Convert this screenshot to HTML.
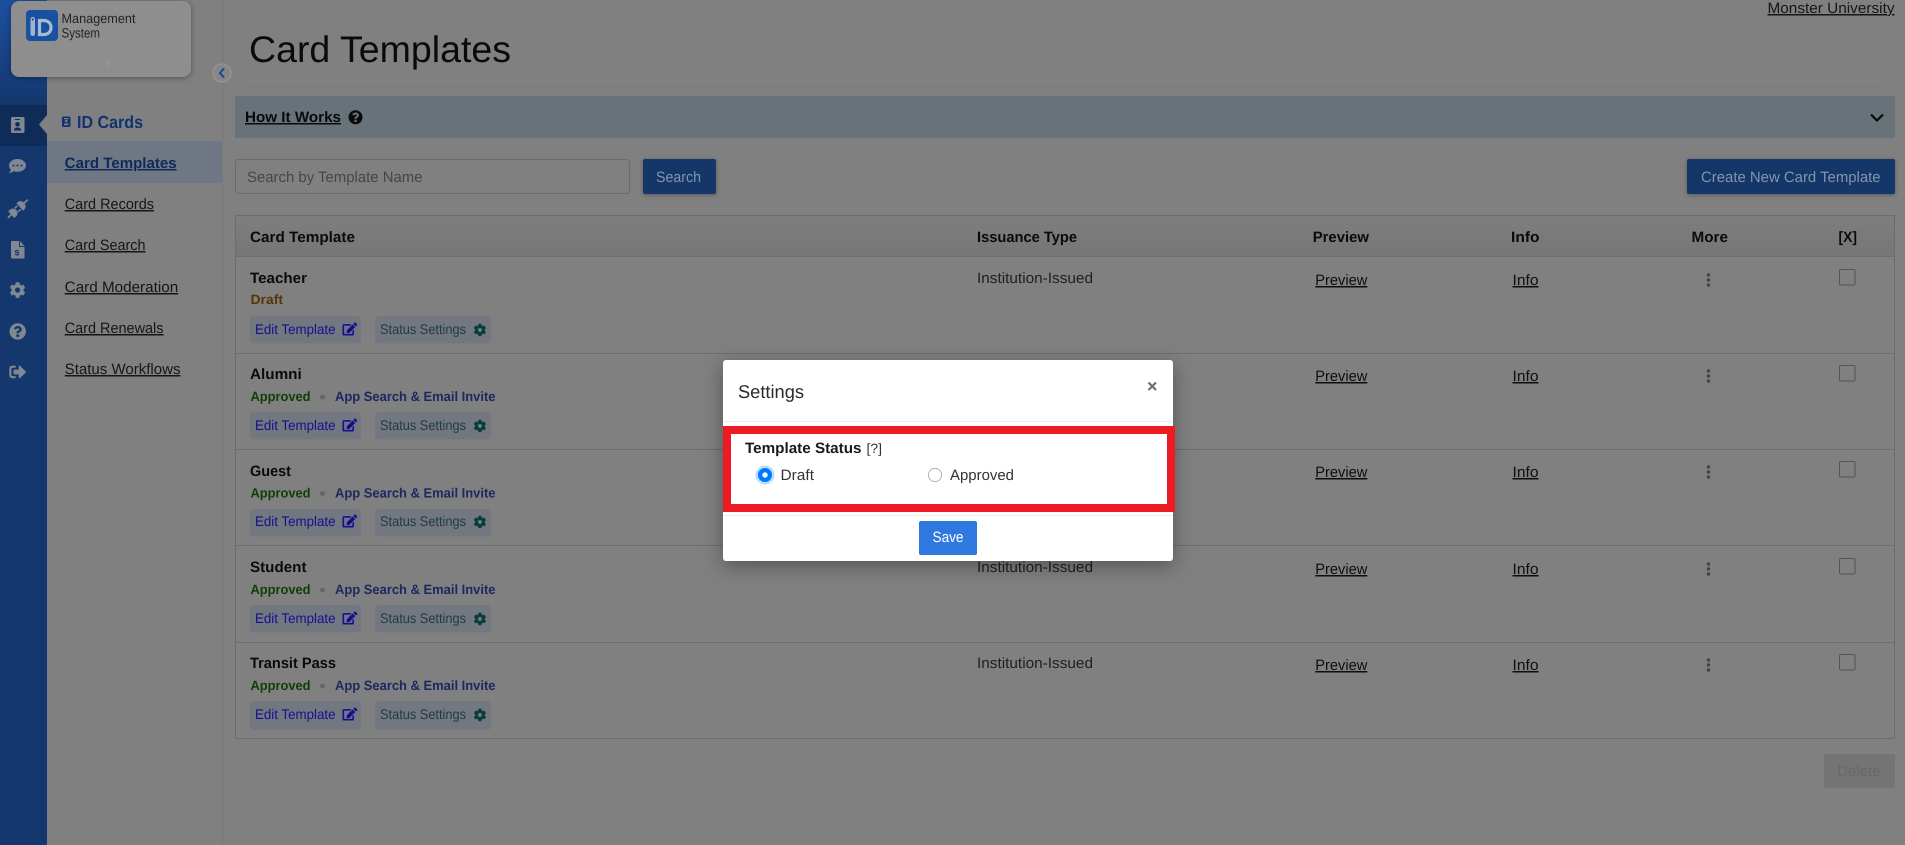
<!DOCTYPE html>
<html lang="en">
<head>
<meta charset="utf-8">
<title>Card Templates</title>
<style>
html,body{margin:0;padding:0;background:#808080;width:1905px;height:845px;overflow:hidden}
svg{display:block}
text{font-family:"Liberation Sans",sans-serif;font-size:15px;fill:#111;text-rendering:geometricPrecision}
.b{font-weight:700}
.u{text-decoration:underline}
.nav{fill:#161616}
.hd{font-weight:700;fill:#0a0a0a}
.nm{font-weight:700;fill:#0a0a0a}
.ap{font-weight:700;fill:#123c08;font-size:13.5px}
.as{font-weight:700;fill:#1f2762;font-size:13.5px}
.et{fill:#16108e;font-size:14px}
.st{fill:#1f3a44;font-size:14px}
.ln{fill:#0e0e0e}
.ii{fill:#202020}
</style>
</head>
<body>
<svg width="1905" height="845" viewBox="0 0 1905 845" xmlns="http://www.w3.org/2000/svg">
<defs>
<linearGradient id="sb" x1="0" y1="0" x2="0" y2="1"><stop offset="0" stop-color="#1c509f"/><stop offset="1" stop-color="#14376d"/></linearGradient>
<linearGradient id="th" x1="0" y1="0" x2="0" y2="1"><stop offset="0" stop-color="#7e7e7e"/><stop offset="1" stop-color="#767676"/></linearGradient>
<path id="qc" d="M504 256c0 136.997-111.043 248-248 248S8 392.997 8 256C8 119.083 119.043 8 256 8s248 111.083 248 248zM262.655 90c-54.497 0-89.255 22.957-116.549 63.758-3.536 5.286-2.353 12.415 2.715 16.258l34.699 26.310c5.205 3.947 12.621 3.008 16.665-2.122 17.864-22.658 30.113-35.797 57.303-35.797 20.429 0 45.698 13.148 45.698 32.958 0 14.976-12.363 22.667-32.534 33.976C247.128 238.528 216 254.941 216 296v4c0 6.627 5.373 12 12 12h56c6.627 0 12-5.373 12-12v-1.333c0-28.462 83.186-29.647 83.186-106.667 0-58.002-60.165-102-116.531-102zM256 338c-25.365 0-46 20.635-46 46 0 25.364 20.635 46 46 46s46-20.636 46-46c0-25.365-20.635-46-46-46z"/>
<path id="cog" d="M487.400 315.700l-42.600-24.600c4.300-23.200 4.300-47 0-70.200l42.600-24.600c4.900-2.800 7.100-8.600 5.500-14-11.100-35.600-30-67.800-54.700-94.600-3.800-4.100-10-5.100-14.800-2.300L380.800 110c-17.900-15.400-38.500-27.300-60.800-35.100V25.800c0-5.600-3.900-10.500-9.400-11.700-36.700-8.200-74.300-7.800-109.200 0-5.500 1.200-9.400 6.100-9.400 11.700V75c-22.200 7.900-42.800 19.800-60.800 35.100L88.700 85.500c-4.900-2.800-11-1.900-14.800 2.300-24.700 26.700-43.600 58.900-54.700 94.600-1.700 5.400.6 11.200 5.500 14L67.300 221c-4.300 23.200-4.300 47 0 70.200l-42.600 24.600c-4.900 2.800-7.100 8.600-5.500 14 11.100 35.600 30 67.800 54.700 94.600 3.800 4.100 10 5.100 14.800 2.300l42.600-24.600c17.900 15.400 38.500 27.300 60.800 35.100v49.200c0 5.600 3.900 10.500 9.400 11.700 36.700 8.200 74.300 7.800 109.200 0 5.500-1.200 9.400-6.100 9.400-11.700v-49.200c22.200-7.900 42.800-19.800 60.800-35.100l42.600 24.600c4.900 2.800 11 1.900 14.800-2.300 24.700-26.700 43.600-58.900 54.700-94.600 1.500-5.500-.7-11.300-5.600-14.100zM256 336c-44.100 0-80-35.900-80-80s35.900-80 80-80 80 35.900 80 80-35.900 80-80 80z"/>
<path id="ed" d="M402.600 83.200l90.200 90.200c3.800 3.800 3.800 10 0 13.800L274.400 405.600l-92.800 10.300c-12.400 1.400-22.900-9.100-21.500-21.500l10.300-92.800L388.800 83.200c3.800-3.800 10-3.800 13.800 0zm162-22.900l-48.800-48.800c-15.200-15.200-39.900-15.200-55.200 0l-35.400 35.400c-3.800 3.800-3.800 10 0 13.800l90.200 90.200c3.800 3.800 10 3.800 13.800 0l35.400-35.400c15.200-15.300 15.200-40 0-55.200zM384 346.200V448H64V128h229.800c3.200 0 6.200-1.300 8.500-3.500l40-40c7.600-7.600 2.200-20.500-8.500-20.500H48C21.500 64 0 85.500 0 112v352c0 26.500 21.500 48 48 48h352c26.500 0 48-21.500 48-48V306.200c0-10.700-12.900-16-20.500-8.500l-40 40c-2.200 2.300-3.500 5.300-3.500 8.500z"/>
</defs>

<!-- sidebar -->
<rect x="0" y="0" width="47" height="845" fill="#14376d"/>
<rect x="0" y="0" width="47" height="105" fill="url(#sb)"/>
<rect x="0" y="105" width="47" height="41" fill="#0f2b58"/>
<path d="M47 115L39 124.500L47 134Z" fill="#808080"/>
<rect x="222" y="0" width="1" height="845" fill="#777"/>

<!-- sidebar icons -->
<g fill="#7f8893">
<path fill-rule="evenodd" d="M12 117h11a1.500 1.500 0 0 1 1.500 1.500v13a1.500 1.500 0 0 1-1.500 1.500H12.500a1.500 1.500 0 0 1-1.500-1.500v-13A1.500 1.500 0 0 1 12 117zM15 119v1h5v-1zM17.500 122a2.300 2.300 0 1 0 .01 0zM13.800 130.500h7.400c0-2-1.700-3-3.700-3s-3.700 1-3.700 3z"/>
<path d="M17.500 159c-4.800 0-8.500 2.900-8.500 6.500 0 1.600.7 3 1.900 4.100-.3 1.300-1.300 2.500-2.200 3.200 2 0 3.800-.7 5.100-1.700 1.100.4 2.400.7 3.700.7 4.800 0 8.500-2.900 8.500-6.300s-3.700-6.500-8.500-6.500z"/>
<g fill="#14376d"><circle cx="13.500" cy="165.500" r="1"/><circle cx="17.500" cy="165.500" r="1"/><circle cx="21.500" cy="165.500" r="1"/></g>
<g transform="rotate(-42 17.500 209)">
<rect x="4.500" y="208.200" width="5" height="1.700"/>
<path d="M9 204.500h2.500c2.500 0 4.500 2 4.500 4.500s-2 4.500-4.500 4.500H9z"/>
<rect x="16" y="205.800" width="3.500" height="1.500"/><rect x="16" y="210.700" width="3.500" height="1.500"/>
<path d="M20.500 204h1.500c3 .3 4.500 2.300 4.500 5s-1.500 4.700-4.500 5h-1.500z"/>
<rect x="26.500" y="208.200" width="5" height="1.700"/>
</g>
<path d="M11 241h8v6h5.500v10.500a1 1 0 0 1-1 1H12a1 1 0 0 1-1-1zM20 241l4.500 5H20z"/>
<use href="#cog" transform="translate(9.500 282) scale(.0315)"/>
<use href="#qc" transform="translate(9.300 323) scale(.033)"/>
<g transform="translate(9.300 363.500) scale(.033)"><path d="M497 273L329 441c-15 15-41 4.500-41-17v-96H152c-13.300 0-24-10.700-24-24v-96c0-13.300 10.700-24 24-24h136V88c0-21.400 25.900-32 41-17l168 168c9.300 9.400 9.300 24.600 0 34zM192 436v-40c0-6.600-5.400-12-12-12H96c-17.700 0-32-14.300-32-32V160c0-17.700 14.300-32 32-32h84c6.600 0 12-5.400 12-12V76c0-6.600-5.400-12-12-12H96c-53 0-96 43-96 96v192c0 53 43 96 96 96h84c6.600 0 12-5.400 12-12z"/></g>
</g>
<text x="14.500" y="255.500" textLength="5" lengthAdjust="spacingAndGlyphs" style="font-size:8px;fill:#14376d;font-weight:700">$</text>

<!-- logo card -->
<rect x="11" y="1" width="180" height="76" rx="8" fill="#8e8e8e" style="filter:drop-shadow(0 1px 3px rgba(0,0,0,.35))"/>
<rect x="26" y="10" width="32" height="31" rx="4" fill="#17519f"/>
<rect x="30.500" y="17" width="4.500" height="19" rx="2.200" fill="#a3b3cc"/>
<circle cx="32.700" cy="19.500" r="1.100" fill="#17519f"/>
<path d="M39.500 20.500h4c4.300 0 7.500 2.600 7.500 7s-3.200 7-7.500 7h-4z" fill="none" stroke="#a9b9d2" stroke-width="3.200"/>
<text x="61.500" y="23" textLength="74" lengthAdjust="spacingAndGlyphs" style="font-size:13.500px;fill:#242424">Management</text>
<text x="61.500" y="37.500" textLength="38.500" lengthAdjust="spacingAndGlyphs" style="font-size:13.500px;fill:#242424">System</text>
<rect x="106" y="61" width="4" height="5" fill="#939393"/>

<!-- collapse button -->
<circle cx="222" cy="73" r="9" fill="#868686" stroke="#999" stroke-width="1"/>
<path d="M224 68.500L220 73L224 77.500" fill="none" stroke="#174792" stroke-width="2"/>

<!-- secondary nav -->
<rect x="62" y="116.500" width="8.500" height="10.500" rx="1.500" fill="#0f3370"/>
<rect x="64" y="118" width="4.500" height="1.200" fill="#808080"/>
<circle cx="66.200" cy="121" r="1.300" fill="#808080"/>
<rect x="64" y="123.500" width="4.500" height="1.700" fill="#808080"/>
<text x="77" y="128" textLength="66" lengthAdjust="spacingAndGlyphs" class="b" style="font-size:17.500px;fill:#0f3370">ID Cards</text>
<rect x="47" y="141" width="175" height="42" fill="#6f7785"/>
<text x="64.700" y="168" textLength="112" lengthAdjust="spacingAndGlyphs" class="b u" style="fill:#0e2a58">Card Templates</text>
<text x="64.700" y="209" textLength="89.300" lengthAdjust="spacingAndGlyphs" class="nav u">Card Records</text>
<text x="64.700" y="250" textLength="80.800" lengthAdjust="spacingAndGlyphs" class="nav u">Card Search</text>
<text x="64.700" y="292" textLength="113.500" lengthAdjust="spacingAndGlyphs" class="nav u">Card Moderation</text>
<text x="64.700" y="333" textLength="98.800" lengthAdjust="spacingAndGlyphs" class="nav u">Card Renewals</text>
<text x="64.700" y="374" textLength="115.800" lengthAdjust="spacingAndGlyphs" class="nav u">Status Workflows</text>

<!-- top -->
<text x="1767.500" y="13" textLength="127" lengthAdjust="spacingAndGlyphs" class="nav u">Monster University</text>
<text x="249" y="62" textLength="262" lengthAdjust="spacingAndGlyphs" style="font-size:37px;fill:#0a0a0a">Card Templates</text>
<rect x="248" y="86" width="1633" height="1" fill="#7b7b7b"/>

<!-- how it works -->
<rect x="235" y="96" width="1660" height="42" fill="#677378"/>
<text x="245" y="122" textLength="96" lengthAdjust="spacingAndGlyphs" class="b u" style="fill:#0a0a0a">How It Works</text>
<use href="#qc" fill="#0a0a0a" transform="translate(348.300 110) scale(.0282)"/>
<path d="M1871 114.500L1877 120.500L1883 114.500" fill="none" stroke="#0a0a0a" stroke-width="2.200"/>

<!-- search -->
<rect x="235.500" y="159.500" width="394" height="34" rx="3" fill="#808080" stroke="#6b6b6b"/>
<text x="247" y="182" textLength="175.500" lengthAdjust="spacingAndGlyphs" style="fill:#464646">Search by Template Name</text>
<rect x="643" y="159" width="73" height="35" rx="2" fill="#143668" style="filter:drop-shadow(0 1px 2px rgba(0,0,0,.3))"/>
<text x="656" y="182" textLength="45" lengthAdjust="spacingAndGlyphs" style="fill:#8394ad">Search</text>
<rect x="1687" y="159" width="208" height="35" rx="2" fill="#143668" style="filter:drop-shadow(0 1px 2px rgba(0,0,0,.3))"/>
<text x="1701" y="182" textLength="179.600" lengthAdjust="spacingAndGlyphs" style="fill:#8394ad">Create New Card Template</text>

<!-- table -->
<rect x="235.500" y="215.500" width="1659" height="523" fill="#808080" stroke="#6c6c6c"/>
<rect x="236" y="216" width="1658" height="40" fill="url(#th)"/>
<g fill="#6e6e6e">
<rect x="236" y="256" width="1658" height="1"/>
<rect x="236" y="353" width="1658" height="1"/>
<rect x="236" y="449" width="1658" height="1"/>
<rect x="236" y="545" width="1658" height="1"/>
<rect x="236" y="642" width="1658" height="1"/>
</g>
<text x="250" y="242" textLength="105" lengthAdjust="spacingAndGlyphs" class="hd">Card Template</text>
<text x="977" y="242" textLength="100" lengthAdjust="spacingAndGlyphs" class="hd">Issuance Type</text>
<text x="1312.700" y="242" textLength="56.300" lengthAdjust="spacingAndGlyphs" class="hd">Preview</text>
<text x="1511" y="242" textLength="28.500" lengthAdjust="spacingAndGlyphs" class="hd">Info</text>
<text x="1691.500" y="242" textLength="36.500" lengthAdjust="spacingAndGlyphs" class="hd">More</text>
<text x="1838.500" y="242" textLength="18.500" lengthAdjust="spacingAndGlyphs" class="hd">[X]</text>

<!-- row 1 -->
<text x="250" y="283" textLength="57" lengthAdjust="spacingAndGlyphs" class="nm">Teacher</text>
<text x="250.500" y="304" textLength="32.500" lengthAdjust="spacingAndGlyphs" class="b" style="font-size:13.500px;fill:#56350a">Draft</text>
<rect x="250" y="316" width="111" height="27.500" rx="4" fill="#737780"/>
<text x="255" y="334" textLength="80.500" lengthAdjust="spacingAndGlyphs" class="et">Edit Template</text>
<rect x="375" y="316" width="116" height="27.500" rx="4" fill="#737780"/>
<text x="380" y="334" textLength="86" lengthAdjust="spacingAndGlyphs" class="st">Status Settings</text>
<text x="977" y="283" textLength="116" lengthAdjust="spacingAndGlyphs" class="ii">Institution-Issued</text>
<text x="1315.300" y="285" textLength="52" lengthAdjust="spacingAndGlyphs" class="ln u">Preview</text>
<text x="1512.500" y="285" textLength="26" lengthAdjust="spacingAndGlyphs" class="ln u">Info</text>
<g fill="#444"><circle cx="1708.500" cy="275" r="1.700"/><circle cx="1708.500" cy="280" r="1.700"/><circle cx="1708.500" cy="285" r="1.700"/></g>
<rect x="1839.500" y="269.500" width="15.500" height="15.500" rx="1.500" fill="none" stroke="#555"/>

<!-- row 2 -->
<text x="250" y="379" textLength="51.700" lengthAdjust="spacingAndGlyphs" class="nm">Alumni</text>
<text x="250.500" y="401" textLength="60" lengthAdjust="spacingAndGlyphs" class="ap">Approved</text>
<circle cx="322.500" cy="397" r="2.500" fill="#666"/>
<text x="335" y="401" textLength="160.500" lengthAdjust="spacingAndGlyphs" class="as">App Search &amp; Email Invite</text>
<rect x="250" y="412" width="111" height="27.500" rx="4" fill="#737780"/>
<text x="255" y="430" textLength="80.500" lengthAdjust="spacingAndGlyphs" class="et">Edit Template</text>
<rect x="375" y="412" width="116" height="27.500" rx="4" fill="#737780"/>
<text x="380" y="430" textLength="86" lengthAdjust="spacingAndGlyphs" class="st">Status Settings</text>
<text x="1315.300" y="381" textLength="52" lengthAdjust="spacingAndGlyphs" class="ln u">Preview</text>
<text x="1512.500" y="381" textLength="26" lengthAdjust="spacingAndGlyphs" class="ln u">Info</text>
<g fill="#444"><circle cx="1708.500" cy="371" r="1.700"/><circle cx="1708.500" cy="376" r="1.700"/><circle cx="1708.500" cy="381" r="1.700"/></g>
<rect x="1839.500" y="365.500" width="15.500" height="15.500" rx="1.500" fill="none" stroke="#555"/>

<!-- row 3 -->
<text x="250" y="476" textLength="41" lengthAdjust="spacingAndGlyphs" class="nm">Guest</text>
<text x="250.500" y="497.500" textLength="60" lengthAdjust="spacingAndGlyphs" class="ap">Approved</text>
<circle cx="322.500" cy="493.500" r="2.500" fill="#666"/>
<text x="335" y="497.500" textLength="160.500" lengthAdjust="spacingAndGlyphs" class="as">App Search &amp; Email Invite</text>
<rect x="250" y="509" width="111" height="27.500" rx="4" fill="#737780"/>
<text x="255" y="526" textLength="80.500" lengthAdjust="spacingAndGlyphs" class="et">Edit Template</text>
<rect x="375" y="509" width="116" height="27.500" rx="4" fill="#737780"/>
<text x="380" y="526" textLength="86" lengthAdjust="spacingAndGlyphs" class="st">Status Settings</text>
<text x="1315.300" y="477" textLength="52" lengthAdjust="spacingAndGlyphs" class="ln u">Preview</text>
<text x="1512.500" y="477" textLength="26" lengthAdjust="spacingAndGlyphs" class="ln u">Info</text>
<g fill="#444"><circle cx="1708.500" cy="467" r="1.700"/><circle cx="1708.500" cy="472" r="1.700"/><circle cx="1708.500" cy="477" r="1.700"/></g>
<rect x="1839.500" y="461.500" width="15.500" height="15.500" rx="1.500" fill="none" stroke="#555"/>

<!-- row 4 -->
<text x="250" y="572" textLength="56.500" lengthAdjust="spacingAndGlyphs" class="nm">Student</text>
<text x="250.500" y="594" textLength="60" lengthAdjust="spacingAndGlyphs" class="ap">Approved</text>
<circle cx="322.500" cy="590" r="2.500" fill="#666"/>
<text x="335" y="594" textLength="160.500" lengthAdjust="spacingAndGlyphs" class="as">App Search &amp; Email Invite</text>
<rect x="250" y="605" width="111" height="27.500" rx="4" fill="#737780"/>
<text x="255" y="623" textLength="80.500" lengthAdjust="spacingAndGlyphs" class="et">Edit Template</text>
<rect x="375" y="605" width="116" height="27.500" rx="4" fill="#737780"/>
<text x="380" y="623" textLength="86" lengthAdjust="spacingAndGlyphs" class="st">Status Settings</text>
<text x="977" y="572" textLength="116" lengthAdjust="spacingAndGlyphs" class="ii">Institution-Issued</text>
<text x="1315.300" y="574" textLength="52" lengthAdjust="spacingAndGlyphs" class="ln u">Preview</text>
<text x="1512.500" y="574" textLength="26" lengthAdjust="spacingAndGlyphs" class="ln u">Info</text>
<g fill="#444"><circle cx="1708.500" cy="564" r="1.700"/><circle cx="1708.500" cy="569" r="1.700"/><circle cx="1708.500" cy="574" r="1.700"/></g>
<rect x="1839.500" y="558.500" width="15.500" height="15.500" rx="1.500" fill="none" stroke="#555"/>

<!-- row 5 -->
<text x="250" y="668" textLength="86" lengthAdjust="spacingAndGlyphs" class="nm">Transit Pass</text>
<text x="250.500" y="690" textLength="60" lengthAdjust="spacingAndGlyphs" class="ap">Approved</text>
<circle cx="322.500" cy="686" r="2.500" fill="#666"/>
<text x="335" y="690" textLength="160.500" lengthAdjust="spacingAndGlyphs" class="as">App Search &amp; Email Invite</text>
<rect x="250" y="701" width="111" height="29" rx="4" fill="#737780"/>
<text x="255" y="719" textLength="80.500" lengthAdjust="spacingAndGlyphs" class="et">Edit Template</text>
<rect x="375" y="701" width="116" height="29" rx="4" fill="#737780"/>
<text x="380" y="719" textLength="86" lengthAdjust="spacingAndGlyphs" class="st">Status Settings</text>
<text x="977" y="668" textLength="116" lengthAdjust="spacingAndGlyphs" class="ii">Institution-Issued</text>
<text x="1315.300" y="670" textLength="52" lengthAdjust="spacingAndGlyphs" class="ln u">Preview</text>
<text x="1512.500" y="670" textLength="26" lengthAdjust="spacingAndGlyphs" class="ln u">Info</text>
<g fill="#444"><circle cx="1708.500" cy="660" r="1.700"/><circle cx="1708.500" cy="665" r="1.700"/><circle cx="1708.500" cy="670" r="1.700"/></g>
<rect x="1839.500" y="654.500" width="15.500" height="15.500" rx="1.500" fill="none" stroke="#555"/>

<!-- edit icons -->
<g fill="#16108e">
<use href="#ed" transform="translate(342.500 322.500) scale(.0255)"/>
<use href="#ed" transform="translate(342.500 418.500) scale(.0255)"/>
<use href="#ed" transform="translate(342.500 514.500) scale(.0255)"/>
<use href="#ed" transform="translate(342.500 611.500) scale(.0255)"/>
<use href="#ed" transform="translate(342.500 707.500) scale(.0255)"/>
</g>

<!-- status gear icons -->
<g fill="#073c3c">
<use href="#cog" transform="translate(473.500 323.500) scale(.0252)"/>
<use href="#cog" transform="translate(473.500 419.500) scale(.0252)"/>
<use href="#cog" transform="translate(473.500 515.500) scale(.0252)"/>
<use href="#cog" transform="translate(473.500 612.500) scale(.0252)"/>
<use href="#cog" transform="translate(473.500 708.500) scale(.0252)"/>
</g>

<!-- delete -->
<rect x="1824" y="754" width="71" height="34" rx="2" fill="#747474"/>
<text x="1837" y="776" textLength="43.600" lengthAdjust="spacingAndGlyphs" style="fill:#696969">Delete</text>

<!-- modal -->
<rect x="723" y="360" width="450" height="201" rx="3" fill="#fff" style="filter:drop-shadow(0 5px 10px rgba(0,0,0,.35))"/>
<text x="738" y="398" textLength="66" lengthAdjust="spacingAndGlyphs" style="font-size:18.500px;fill:#2a2a2a">Settings</text>
<path d="M1148.500 382.500L1156 390M1156 382.500L1148.500 390" stroke="#707070" stroke-width="2.200" fill="none"/>
<rect x="723" y="421" width="450" height="1" fill="#e9ecef"/>
<rect x="723" y="515" width="450" height="1" fill="#e9ecef"/>
<rect x="727" y="430" width="444" height="78" fill="#fff" stroke="#ed1c24" stroke-width="8"/>
<text x="745" y="453" textLength="116.500" lengthAdjust="spacingAndGlyphs" class="b" style="fill:#1a1a1a">Template Status</text>
<text x="866.500" y="453" textLength="15.500" lengthAdjust="spacingAndGlyphs" style="font-size:13.500px;fill:#333">[?]</text>
<circle cx="765" cy="475" r="9.500" fill="#bcdcff"/>
<circle cx="765" cy="475" r="7" fill="#007bff"/>
<circle cx="765" cy="475" r="2.700" fill="#fff"/>
<text x="780.500" y="480" textLength="33.500" lengthAdjust="spacingAndGlyphs" style="fill:#333">Draft</text>
<circle cx="935" cy="475" r="6.600" fill="#fff" stroke="#adb5bd" stroke-width="1"/>
<text x="950" y="480" textLength="64" lengthAdjust="spacingAndGlyphs" style="fill:#333">Approved</text>
<rect x="919" y="521" width="58" height="34" rx="2" fill="#2e78e0"/>
<text x="932.500" y="542" textLength="31" lengthAdjust="spacingAndGlyphs" style="fill:#fff">Save</text>
</svg>
</body>
</html>
